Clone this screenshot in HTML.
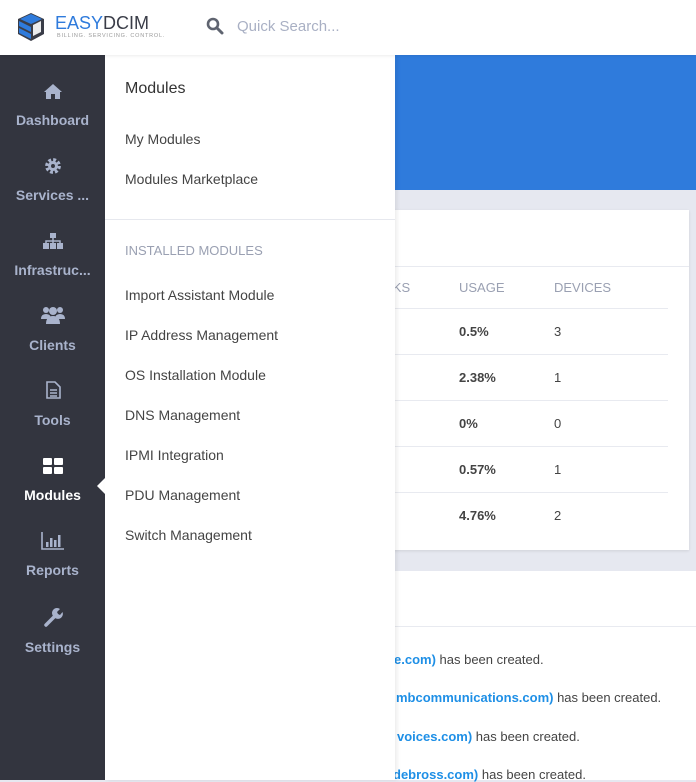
<!DOCTYPE html>
<html><head><meta charset="utf-8"><style>
*{margin:0;padding:0;box-sizing:border-box}
body{width:696px;height:780px;overflow:hidden;background:#e6e8f0;font-family:"Liberation Sans",sans-serif;position:relative}
.hdr{position:absolute;left:0;top:0;width:696px;height:55px;background:#fff;box-shadow:0 1px 3px rgba(0,0,0,.08);z-index:3}
.side{position:absolute;left:0;top:55px;width:105px;height:725px;background:#33353f;z-index:2}
.it{position:absolute;left:0;width:105px;text-align:center;color:#a9b3cc;font-weight:bold;font-size:14px}
.it svg{display:block;margin:0 auto 12px}
.drop{position:absolute;left:105px;top:55px;width:290px;height:725px;background:#fff;z-index:2;box-shadow:2px 0 4px rgba(0,0,0,.08)}
.drop div{position:absolute;left:20px;font-size:14px;color:#444}
.blue{position:absolute;left:395px;top:55px;width:301px;height:135px;background:#2f7bdc}
.card{position:absolute;left:380px;top:210px;width:309px;height:340px;background:#fff;box-shadow:0 1px 3px rgba(0,0,0,.1)}
.card2{position:absolute;left:380px;top:571px;width:316px;height:209px;background:#fff}
.t{position:absolute;font-size:13px;color:#444}
.h{color:#9aa0b2}
.b{font-weight:bold}
.ln{position:absolute;height:1px;background:#e8eaf0}
.lk{color:#1e8fe6;font-weight:bold}
</style></head><body>
<div class="hdr">
<svg style="position:absolute;left:16px;top:12px" width="30" height="30" viewBox="0 0 30 30"><path d="M15 1 L28 7 L28 22 L15 29 L2 22 L2 7Z" fill="#3a3d48"/><path d="M3 9 L15 15 L15 20 L3 14Z M3 16 L15 22 L15 27 L3 21Z" fill="#2f7bdc"/><path d="M4 7 L15 2 L26 7 L15 12Z" fill="#2f7bdc"/><path d="M17 13 L25 9 L25 20 L17 24Z" fill="#fff" opacity=".9"/></svg>
<div style="position:absolute;left:55px;top:13px;font-size:18px;color:#2f7bdc;line-height:20px">EASY<span style="color:#3a3d48">DCIM</span></div>
<div style="position:absolute;left:57px;top:33px;font-size:5.5px;letter-spacing:.8px;color:#999">BILLING. SERVICING. CONTROL.</div>
<svg style="position:absolute;left:206px;top:17px" width="18" height="18" viewBox="0 0 18 18"><circle cx="7" cy="7" r="5" fill="none" stroke="#5f6470" stroke-width="2.6"/><path d="M11 11 L16 16" stroke="#5f6470" stroke-width="3" stroke-linecap="round"/></svg>
<div style="position:absolute;left:237px;top:18px;font-size:15px;color:#a9b0c4">Quick Search...</div>
</div>
<div class="side">
<div class="it" style="top:27px"><svg width="20" height="18" viewBox="0 0 20 16"><path d="M10 1 L1 9 L3 9 L3 16 L8 16 L8 11 L12 11 L12 16 L17 16 L17 9 L19 9Z" fill="#a9b3cc"/></svg>Dashboard</div>
<div class="it" style="top:102px"><svg width="20" height="18" viewBox="0 0 20 20"><circle cx="10" cy="10" r="6.5" fill="none" stroke="#a9b3cc" stroke-width="4.5" stroke-dasharray="3 2.1"/><circle cx="10" cy="10" r="5.5" fill="#a9b3cc"/><circle cx="10" cy="10" r="2.2" fill="#33353f"/></svg>Services ...</div>
<div class="it" style="top:177px"><svg width="22" height="18" viewBox="0 0 22 16"><rect x="8" y="0" width="6" height="5" fill="#a9b3cc"/><path d="M11 5V8M4 10V8H18V10M11 8V10" stroke="#a9b3cc" stroke-width="1.5" fill="none"/><rect x="1" y="10" width="6" height="6" fill="#a9b3cc"/><rect x="8" y="10" width="6" height="6" fill="#a9b3cc"/><rect x="15" y="10" width="6" height="6" fill="#a9b3cc"/></svg>Infrastruc...</div>
<div class="it" style="top:250px"><svg width="24" height="20" viewBox="0 0 24 18"><circle cx="5" cy="4" r="3" fill="#a9b3cc"/><circle cx="19" cy="4" r="3" fill="#a9b3cc"/><circle cx="12" cy="5" r="4" fill="#a9b3cc"/><path d="M0 13Q0 8 5 8Q10 8 10 13Z M14 13Q14 8 19 8Q24 8 24 13Z M5 18Q5 10 12 10Q19 10 19 18Z" fill="#a9b3cc"/></svg>Clients</div>
<div class="it" style="top:325px"><svg width="16" height="20" viewBox="0 0 16 18"><path d="M2 1H10L15 6V17H2Z" fill="none" stroke="#a9b3cc" stroke-width="1.6"/><path d="M5 9H12M5 12H12M5 15H12" stroke="#a9b3cc" stroke-width="1.5"/></svg>Tools</div>
<div class="it" style="top:402px;color:#fff"><svg width="22" height="18" viewBox="0 0 22 16"><rect x="1" y="0" width="9" height="7" rx="1" fill="#fff"/><rect x="12" y="0" width="9" height="7" rx="1" fill="#fff"/><rect x="1" y="9" width="9" height="7" rx="1" fill="#fff"/><rect x="12" y="9" width="9" height="7" rx="1" fill="#fff"/></svg>Modules</div>
<div class="it" style="top:477px"><svg width="24" height="18" viewBox="0 0 24 18"><path d="M1 0V17H23" stroke="#a9b3cc" stroke-width="1.6" fill="none"/><rect x="5" y="10" width="2.5" height="5" fill="#a9b3cc"/><rect x="9" y="6" width="2.5" height="9" fill="#a9b3cc"/><rect x="13" y="8" width="2.5" height="7" fill="#a9b3cc"/><rect x="17" y="3" width="2.5" height="12" fill="#a9b3cc"/></svg>Reports</div>
<div class="it" style="top:552px"><svg width="20" height="20" viewBox="0 0 20 20"><path d="M3 18L11 10" stroke="#a9b3cc" stroke-width="3.5" stroke-linecap="round"/><path d="M10 9A5 5 0 0 1 17 2L14 5L15 7L17 8L19.5 5A5 5 0 0 1 12 11Z" fill="#a9b3cc"/></svg>Settings</div>
<div style="position:absolute;left:97px;top:423px;width:0;height:0;border-top:8px solid transparent;border-bottom:8px solid transparent;border-right:8px solid #fff"></div>
</div>
<div class="drop">
<div style="top:25px;font-size:16px;color:#333">Modules</div>
<div style="top:76px">My Modules</div>
<div style="top:116px">Modules Marketplace</div>
<div style="left:0;top:164px;width:290px;height:1px;background:#e6e8ee"></div>
<div style="top:188px;font-size:13px;color:#9aa0b2">INSTALLED MODULES</div>
<div style="top:232px">Import Assistant Module</div>
<div style="top:272px">IP Address Management</div>
<div style="top:312px">OS Installation Module</div>
<div style="top:352px">DNS Management</div>
<div style="top:392px">IPMI Integration</div>
<div style="top:432px">PDU Management</div>
<div style="top:472px">Switch Management</div>
</div>
<div class="blue"></div>
<div class="card">
<div class="ln" style="left:0;top:56px;width:309px"></div>
<div class="t h" style="left:-45px;top:70px">NETWORKS</div>
<div class="t h" style="left:79px;top:70px">USAGE</div>
<div class="t h" style="left:174px;top:70px">DEVICES</div>
<div class="ln" style="left:0;top:98px;width:288px"></div>
<div class="t b" style="left:79px;top:114px">0.5%</div><div class="t" style="left:174px;top:114px">3</div>
<div class="ln" style="left:0;top:144px;width:288px"></div>
<div class="t b" style="left:79px;top:160px">2.38%</div><div class="t" style="left:174px;top:160px">1</div>
<div class="ln" style="left:0;top:190px;width:288px"></div>
<div class="t b" style="left:79px;top:206px">0%</div><div class="t" style="left:174px;top:206px">0</div>
<div class="ln" style="left:0;top:236px;width:288px"></div>
<div class="t b" style="left:79px;top:252px">0.57%</div><div class="t" style="left:174px;top:252px">1</div>
<div class="ln" style="left:0;top:282px;width:288px"></div>
<div class="t b" style="left:79px;top:298px">4.76%</div><div class="t" style="left:174px;top:298px">2</div>
</div>
<div class="card2">
<div class="ln" style="left:0;top:55px;width:316px"></div>
<div class="t" style="left:14px;top:81px;white-space:nowrap"><span class="lk">e.com)</span> has been created.</div>
<div class="t" style="left:16px;top:119px;white-space:nowrap"><span class="lk">mbcommunications.com)</span> has been created.</div>
<div class="t" style="left:17px;top:158px;white-space:nowrap"><span class="lk">voices.com)</span> has been created.</div>
<div class="t" style="left:13px;top:196px;white-space:nowrap"><span class="lk">debross.com)</span> has been created.</div>
</div>
</body></html>
